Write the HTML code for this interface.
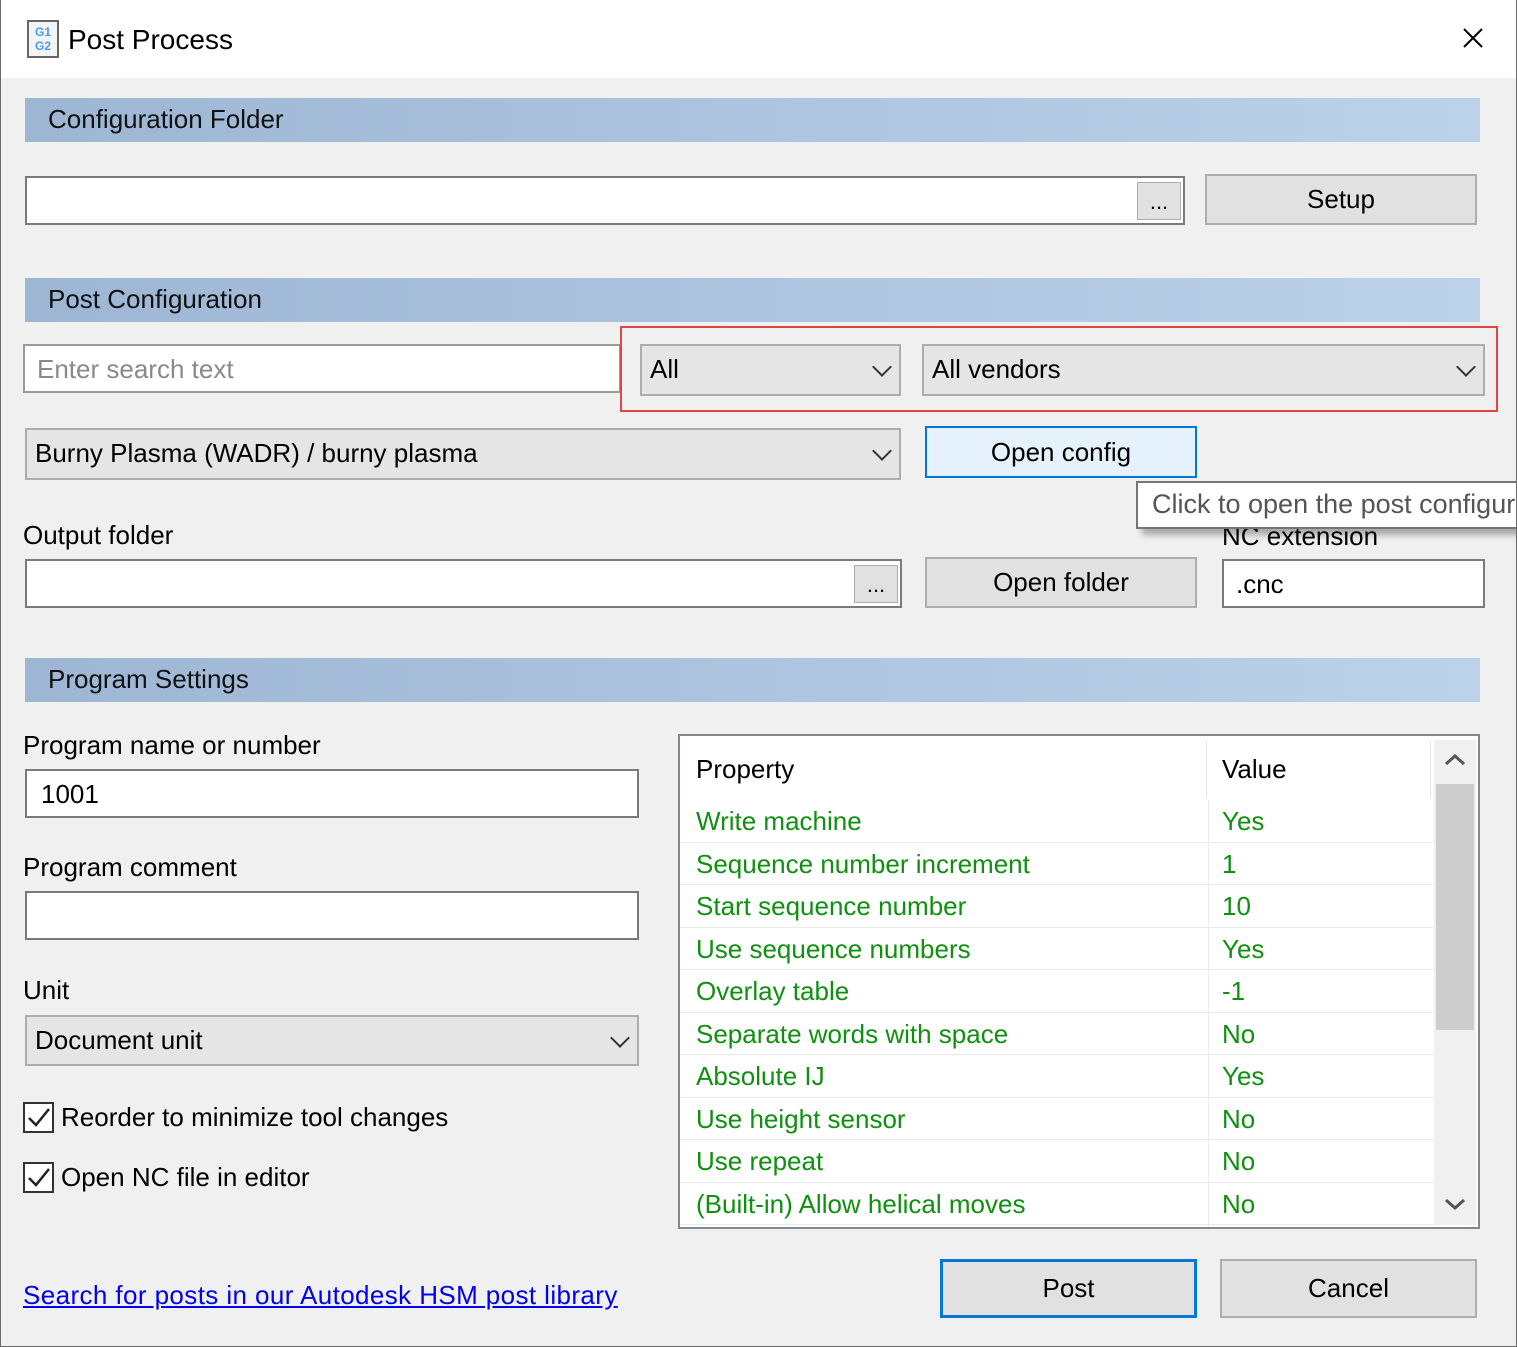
<!DOCTYPE html>
<html><head><meta charset="utf-8"><style>
*{box-sizing:border-box;margin:0;padding:0}
body{width:1517px;height:1347px;background:#f0f0f0;font-family:"Liberation Sans",sans-serif;font-size:26px;color:#000;position:relative;overflow:hidden}
.a{position:absolute}
.title{left:0;top:0;width:1517px;height:78px;background:#fff}
.band{left:25px;width:1455px;height:44px;background:linear-gradient(90deg,#9db6d4,#bcd2ea);padding:6px 0 0 23px;color:#111}
.inp{background:#fff;border:2px solid #7a7a7a}
.btn{background:#e1e1e1;border:2px solid #adadad;text-align:center}
.combo{background:#e5e5e5;border:2px solid #adadad;padding:8px 0 0 8px}
.chev{position:absolute;right:10px;top:14px;width:14px;height:14px;border-right:2px solid #333;border-bottom:2px solid #333;transform:rotate(45deg)}
.dots{background:#e1e1e1;border:1px solid #adadad;font-size:22px;text-align:center;line-height:38px}
.g{color:#109010}
.row{position:absolute;left:0;width:754px;height:42.5px;border-bottom:1px solid #eaeaea}
.row span{position:absolute;top:6px}
.cb{width:31px;height:31px;border:2px solid #333;background:#fff}
</style></head><body>
<div class="a" style="left:0;top:0;width:1517px;height:1347px;border:1px solid #6a6a6a;border-top:none;z-index:5;pointer-events:none"></div>
<div class="a title"></div>
<div class="a" style="left:27px;top:20px;width:32px;height:38px;border:2px solid #666;background:#f4f4f4;font:bold 12px 'Liberation Sans',sans-serif;color:#4a9af0;line-height:14px;text-align:center;padding-top:3px">G1<br>G2</div>
<div class="a" style="left:68px;top:24px;font-size:28px">Post Process</div>
<svg class="a" style="left:1462px;top:27px" width="22" height="22"><path d="M2 2 L20 20 M20 2 L2 20" stroke="#000" stroke-width="2" fill="none"/></svg>

<div class="a band" style="top:98px">Configuration Folder</div>
<div class="a inp" style="left:25px;top:176px;width:1160px;height:49px"></div>
<div class="a dots" style="left:1137px;top:182px;width:44px;height:38px">...</div>
<div class="a btn" style="left:1205px;top:174px;width:272px;height:51px;line-height:47px">Setup</div>

<div class="a band" style="top:278px">Post Configuration</div>
<div class="a inp" style="left:23px;top:344px;width:598px;height:49px;padding:8px 0 0 12px;color:#8a8a8a;border-color:#9a9a9a">Enter search text</div>
<div class="a" style="left:620px;top:326px;width:878px;height:86px;border:2px solid #e04545"></div>
<div class="a combo" style="left:640px;top:344px;width:261px;height:52px">All<div class="chev"></div></div>
<div class="a combo" style="left:922px;top:344px;width:563px;height:52px">All vendors<div class="chev"></div></div>

<div class="a combo" style="left:25px;top:428px;width:876px;height:52px">Burny Plasma (WADR) / burny plasma<div class="chev"></div></div>
<div class="a" style="left:925px;top:426px;width:272px;height:52px;background:#e5f1fb;border:2px solid #0078d7;text-align:center;line-height:48px">Open config</div>

<div class="a" style="left:23px;top:520px">Output folder</div>
<div class="a inp" style="left:25px;top:559px;width:877px;height:49px"></div>
<div class="a dots" style="left:854px;top:565px;width:44px;height:38px">...</div>
<div class="a btn" style="left:925px;top:557px;width:272px;height:51px;line-height:47px">Open folder</div>
<div class="a" style="left:1222px;top:521px">NC extension</div>
<div class="a inp" style="left:1222px;top:559px;width:263px;height:49px;padding:8px 0 0 12px">.cnc</div>
<div class="a" style="left:1136px;top:481px;width:390px;height:48px;background:#fff;border:2px solid #767676;box-shadow:6px 6px 6px rgba(0,0,0,.3);padding:6px 0 0 14px;color:#555;white-space:nowrap;overflow:hidden;font-size:27px">Click to open the post configuration</div>

<div class="a band" style="top:658px">Program Settings</div>
<div class="a" style="left:23px;top:730px">Program name or number</div>
<div class="a inp" style="left:25px;top:769px;width:614px;height:49px;padding:8px 0 0 14px">1001</div>
<div class="a" style="left:23px;top:852px">Program comment</div>
<div class="a inp" style="left:25px;top:891px;width:614px;height:49px"></div>
<div class="a" style="left:23px;top:975px">Unit</div>
<div class="a combo" style="left:25px;top:1015px;width:614px;height:51px">Document unit<div class="chev"></div></div>
<div class="a cb" style="left:23px;top:1102px"><svg width="27" height="27"><path d="M4 14 L11 21 L24 5" stroke="#222" stroke-width="2.5" fill="none"/></svg></div>
<div class="a" style="left:61px;top:1102px">Reorder to minimize tool changes</div>
<div class="a cb" style="left:23px;top:1162px"><svg width="27" height="27"><path d="M4 14 L11 21 L24 5" stroke="#222" stroke-width="2.5" fill="none"/></svg></div>
<div class="a" style="left:61px;top:1162px">Open NC file in editor</div>

<div class="a" style="left:678px;top:734px;width:802px;height:495px;background:#fff;border:2px solid #828790;overflow:hidden">
 <div class="a" style="left:16px;top:18px">Property</div>
 <div class="a" style="left:526px;top:4px;width:1px;height:58px;background:#e5e5e5"></div>
 <div class="a" style="left:542px;top:18px">Value</div>
 <div class="a" style="left:750px;top:4px;width:1px;height:58px;background:#e5e5e5"></div>
 <div class="a" style="left:528px;top:64px;width:1px;height:440px;background:#eaeaea"></div>
 <div class="row g" style="top:64px"><span style="left:16px">Write machine</span><span style="left:542px">Yes</span></div>
 <div class="row g" style="top:106.5px"><span style="left:16px">Sequence number increment</span><span style="left:542px">1</span></div>
 <div class="row g" style="top:149px"><span style="left:16px">Start sequence number</span><span style="left:542px">10</span></div>
 <div class="row g" style="top:191.5px"><span style="left:16px">Use sequence numbers</span><span style="left:542px">Yes</span></div>
 <div class="row g" style="top:234px"><span style="left:16px">Overlay table</span><span style="left:542px">-1</span></div>
 <div class="row g" style="top:276.5px"><span style="left:16px">Separate words with space</span><span style="left:542px">No</span></div>
 <div class="row g" style="top:319px"><span style="left:16px">Absolute IJ</span><span style="left:542px">Yes</span></div>
 <div class="row g" style="top:361.5px"><span style="left:16px">Use height sensor</span><span style="left:542px">No</span></div>
 <div class="row g" style="top:404px"><span style="left:16px">Use repeat</span><span style="left:542px">No</span></div>
 <div class="row g" style="top:446.5px"><span style="left:16px">(Built-in) Allow helical moves</span><span style="left:542px">No</span></div>
 <div class="a" style="left:754px;top:4px;width:42px;height:485px;background:#f0f0f0"></div>
 <div class="a" style="left:756px;top:48px;width:38px;height:246px;background:#cdcdcd"></div>
 <svg class="a" style="left:762px;top:16px" width="26" height="16"><path d="M4 12 L13 4 L22 12" stroke="#555" stroke-width="3" fill="none"/></svg>
 <svg class="a" style="left:762px;top:460px" width="26" height="16"><path d="M4 4 L13 12 L22 4" stroke="#555" stroke-width="3" fill="none"/></svg>
</div>

<div class="a" style="left:23px;top:1280px;color:#0000ee;text-decoration:underline;letter-spacing:0.4px">Search for posts in our Autodesk HSM post library</div>
<div class="a" style="left:940px;top:1259px;width:257px;height:59px;background:#e1e1e1;border:3px solid #0078d7;text-align:center;line-height:53px">Post</div>
<div class="a btn" style="left:1220px;top:1259px;width:257px;height:59px;line-height:55px">Cancel</div>
</body></html>
